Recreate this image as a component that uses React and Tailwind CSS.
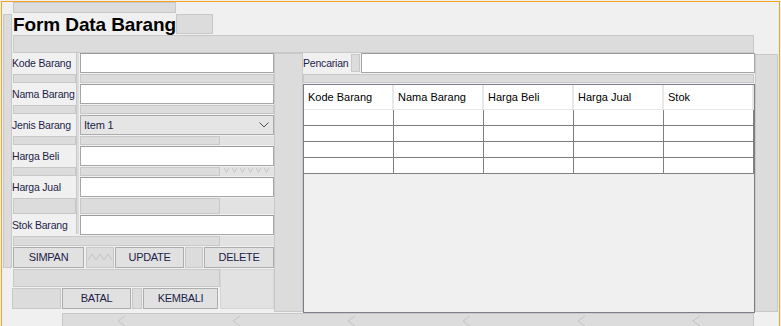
import React from 'react'

const GAP = 'bg-[#dcdcdc] border border-[#c8c8c8]'
const LIGHT = 'bg-[#e2e2e2]'
const TEXT = 'text-[10.5px] tracking-[-0.2px] text-[#1e1e4a]'

function Gap({ className = '' }) {
  return <div className={`${GAP} ${className}`} />
}

function Label({ text }) {
  return <div className={`h-[20px] -ml-px whitespace-nowrap leading-[20px] ${TEXT}`}>{text}</div>
}

function Field({ className = '' }) {
  return <div className={`h-[20px] border border-[#a6a6a6] border-t-[#9c9c9c] bg-white ${className}`} />
}

function Button({ text, className = '' }) {
  return (
    <div className={`flex h-[21px] items-center justify-center border border-[#adadad] bg-[#e1e1e1] text-[11px] tracking-[-0.3px] text-[#1e1e4a] ${className}`}>
      {text}
    </div>
  )
}

// gap row on the field side that has the pale region on its right
function SplitGap({ h, children }) {
  return (
    <div className={`flex ${h}`}>
      <Gap className="w-[140px]" />
      <div className={`flex-1 ${LIGHT}`}>{children}</div>
    </div>
  )
}

const COLS = ['Kode Barang', 'Nama Barang', 'Harga Beli', 'Harga Jual', 'Stok']

export default function App() {
  return (
    <div className="h-[326px] w-[781px] overflow-hidden bg-[#f0f0f0] pl-px pt-px font-['Liberation_Sans',Arial,sans-serif]">
      {/* orange selection frame */}
      <div className="h-[325px] w-[779px] bg-[#f5a41f] px-px pt-px">
        <div className="flex h-[324px] w-[777px] bg-[#f0f0f0]">
          {/* left resize bar */}
          <div className="w-[11px] pl-px pt-[12px]">
            <Gap className="h-[254px] w-[9px]" />
          </div>

          <div className="flex w-[766px] flex-col">
            <Gap className="h-[11px] w-[163px]" />
            <div className="mt-px flex h-[21px]">
              <div className="w-[163px] whitespace-nowrap text-[19px] font-bold leading-[21px] tracking-[-0.1px] text-black">Form Data Barang</div>
              <Gap className="h-[20px] w-[37px]" />
            </div>
            <Gap className="h-[18px] w-[741px]" />

            <div className="flex h-[260px]">
              {/* form column */}
              <div className="flex w-[261px] flex-col gap-px">
                <div className="flex h-[182px]">
                  <div className="flex w-[63px] flex-col gap-px">
                    <Label text="Kode Barang" />
                    <Gap className="h-[9px]" />
                    <Label text="Nama Barang" />
                    <Gap className="h-[9px]" />
                    <Label text="Jenis Barang" />
                    <Gap className="h-[9px]" />
                    <Label text="Harga Beli" />
                    <Gap className="h-[9px]" />
                    <Label text="Harga Jual" />
                    <Gap className="h-[16px]" />
                    <Label text="Stok Barang" />
                  </div>
                  <div className="h-[181px] w-[3px] border-l border-[#c8c8c8] bg-[#dcdcdc]" />
                  <div className="ml-px flex w-[194px] flex-col gap-px">
                    <Field />
                    <Gap className="h-[9px]" />
                    <Field />
                    <Gap className="h-[9px]" />
                    <div className={`flex h-[20px] items-center justify-between border border-[#acacac] bg-[#e5e5e5] pl-[3px] pr-[4px] ${TEXT}`}>
                      <span className="text-[11px]">Item 1</span>
                      <svg width="10" height="6" viewBox="0 0 10 6">
                        <polyline points="0.5,0.5 5,5 9.5,0.5" fill="none" stroke="#505050" strokeWidth="1" />
                      </svg>
                    </div>
                    <SplitGap h="h-[9px]" />
                    <Field />
                    <SplitGap h="h-[9px]">
                      <svg width="54" height="9" viewBox="0 0 54 9">
                        {[0, 1, 2, 3, 4, 5].map((i) => (
                          <polyline key={i} points={`${4 + i * 8},0.5 ${6.5 + i * 8},5.5 ${9 + i * 8},0.5`} fill="none" stroke="#c6c6c6" strokeWidth="1" />
                        ))}
                      </svg>
                    </SplitGap>
                    <Field />
                    <SplitGap h="h-[16px]" />
                    <Field />
                  </div>
                </div>

                <div className="flex h-[10px]">
                  <Gap className="w-[207px]" />
                  <div className={`flex-1 ${LIGHT}`} />
                </div>

                <div className="flex">
                  <Button text="SIMPAN" className="w-[71px]" />
                  <div className={`ml-[2px] h-[21px] w-[28px] ${GAP}`}>
                    <svg width="26" height="19" viewBox="0 0 26 19">
                      <polyline points="1,12 5,6 9,12 13,6 17,12 21,6 25,12" fill="none" stroke="#c4c4c4" strokeWidth="1" />
                    </svg>
                  </div>
                  <Button text="UPDATE" className="ml-px w-[69px]" />
                  <Gap className="ml-px h-[21px] w-[18px]" />
                  <Button text="DELETE" className="ml-px w-[70px]" />
                </div>

                <div className="flex h-[40px]">
                  <div className="flex w-[207px] flex-col gap-px">
                    <Gap className="h-[18px]" />
                    <div className="flex">
                      <Gap className="-ml-px h-[21px] w-[49px]" />
                      <Button text="BATAL" className="ml-px w-[69px]" />
                      <Gap className="ml-px h-[21px] w-[10px]" />
                      <Button text="KEMBALI" className="ml-px w-[75px]" />
                    </div>
                  </div>
                  <div className={`flex-1 border border-[#d6d6d6] ${LIGHT}`} />
                </div>
              </div>

              <Gap className="h-[259px] w-[29px]" />

              {/* search + table */}
              <div className="flex w-[452px] flex-col gap-px">
                <div className="flex h-[20px]">
                  <div className={`w-[48px] whitespace-nowrap leading-[20px] ${TEXT}`}>Pencarian</div>
                  <Gap className="mt-px h-[18px] w-[9px]" />
                  <Field className="ml-px flex-1" />
                </div>
                <Gap className="h-[9px] w-[451px]" />
                <div className="h-[229px] border border-[#7e7e8a] bg-[#f0f0f0]">
                  <div className="flex h-[25px] border-b border-[#e6e6e6] bg-white">
                    {COLS.map((c) => (
                      <div key={c} className="w-[90px] border-r-2 border-[#e8e8e8] pl-[4px] text-[11px] leading-[24px] text-black">
                        {c}
                      </div>
                    ))}
                  </div>
                  {[0, 1, 2, 3].map((r) => (
                    <div key={r} className="flex h-[16px] border-b border-[#808080] bg-white">
                      {COLS.map((c) => (
                        <div key={c} className="w-[90px] border-r border-[#808080]" />
                      ))}
                    </div>
                  ))}
                </div>
              </div>

              <Gap className="mt-px h-[258px] w-[23px]" />
            </div>

            {/* bottom resize strip */}
            <div className="ml-[49px] h-[13px] w-[692px] border-l border-r border-t border-[#c8c8c8] bg-[#dcdcdc]">
              <svg width="690" height="12" viewBox="0 0 690 12">
                {[0, 1, 2, 3, 4, 5].map((i) => (
                  <polyline key={i} points={`${62 + i * 115},2 ${55 + i * 115},7 ${62 + i * 115},12`} fill="none" stroke="#c4c4c4" strokeWidth="1" />
                ))}
              </svg>
            </div>
          </div>
        </div>
      </div>
    </div>
  )
}
